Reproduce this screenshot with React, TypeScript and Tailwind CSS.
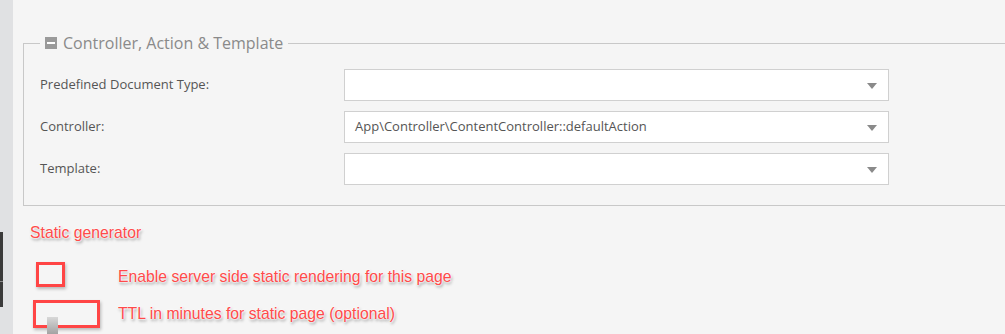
import React from 'react'

const rows = [
  { label: 'Predefined Document Type:', value: '' },
  { label: 'Controller:', value: 'App\\Controller\\ContentController::defaultAction' },
  { label: 'Template:', value: '' },
]

// halo used by the red screenshot annotations
const note =
  "font-['Liberation_Sans',Arial,sans-serif] text-[15.75px] leading-[20px] text-[#ff4a4a] [text-shadow:0_0_2px_#fff,0_0_2px_#fff,0_0_3px_#fff,1px_2px_3px_rgba(0,0,0,0.45)]"

function Select({ value }: { value: string }) {
  return (
    <div className="flex h-[32px] w-[545px] items-center justify-between border border-[#d0d0d0] bg-white pl-[10px] pr-[11px]">
      <span className="text-[13px] text-[#555]">{value}</span>
      <svg width="10" height="6" viewBox="0 0 10 6" className="mt-[1px]">
        <path d="M0 0h10L5 6z" fill="#8a8a8a" />
      </svg>
    </div>
  )
}

export default function App() {
  return (
    <div className="flex h-[334px] w-full overflow-hidden font-['Open_Sans',sans-serif]">
      {/* left panel edge */}
      <div className="flex w-[13px] shrink-0 flex-col bg-[#e0e1e3]">
        <div className="h-[232px]" />
        <div className="flex h-[75px] w-[3px] flex-col bg-[#3a3a3a]">
          <div className="h-[49px]" />
          <div className="h-px bg-[#8a8a8a]" />
        </div>
      </div>

      <main className="relative min-w-0 flex-1 bg-[#f5f5f5] pt-[33px]">
        <fieldset className="ml-[10px] mr-[-2px] border border-r-0 border-[#c8c8c8] pb-[20px] pl-[16px]">
          <legend className="flex h-[20px] items-center px-[5px] text-[16px] leading-[20px] text-[#8a8a8a]">
            <span className="mr-[6px] flex h-[12px] w-[12px] items-center justify-center bg-[#9a9a9a]">
              <span className="h-[2px] w-[8px] bg-white" />
            </span>
            Controller, Action &amp; Template
          </legend>

          <div className="mt-[16px] flex flex-col gap-[10px]">
            {rows.map((r) => (
              <div key={r.label} className="flex items-center">
                <label className="w-[304px] text-[13px] text-[#555]">{r.label}</label>
                <Select value={r.value} />
              </div>
            ))}
          </div>
        </fieldset>

        {/* annotations */}
        <div className="mt-[17px] pl-[17px]">
          <div className={note}>Static generator</div>

          <div className="mt-[18px] flex items-center">
            <div className="w-[88px] pl-[6px]">
              <div className="h-[25px] w-[29px] border-[3px] border-[#ff4545] shadow-[1px_2px_3px_rgba(0,0,0,0.25)]" />
            </div>
            <span className={`${note} mt-[6px]`}>Enable server side static rendering for this page</span>
          </div>

          <div className="mt-[13px] flex items-center">
            <div className="w-[88px] pl-[3px]">
              <div className="relative h-[28px] w-[67px] border-[3px] border-[#ff4545] shadow-[1px_2px_3px_rgba(0,0,0,0.25)]">
                <div className="absolute left-[11px] top-[14px] h-[20px] w-[11px] bg-gradient-to-b from-[#d8d8d8] to-[#9a9a9a]" />
              </div>
            </div>
            <span className={note}>TTL in minutes for static page (optional)</span>
          </div>
        </div>
      </main>
    </div>
  )
}
